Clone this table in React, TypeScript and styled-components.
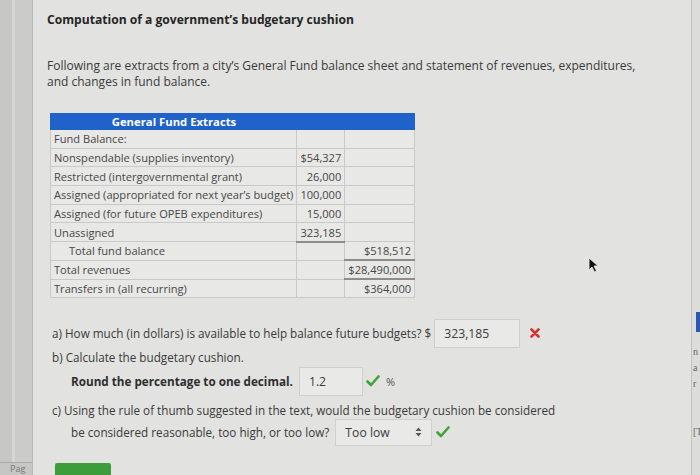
import React from "react";
import styled, { createGlobalStyle } from "styled-components";

const Global = createGlobalStyle`
  html, body { margin: 0; padding: 0; background: #e2e2e0; }
  body { font-family: "Open Sans", "Noto Sans", sans-serif; color: #333; }
  * { box-sizing: border-box; }
`;

const Frame = styled.div`
  position: relative;
  display: flex;
  width: 700px;
  height: 475px;
  overflow: hidden;
  background: #e2e2e0;
`;

const LeftRail = styled.div`
  width: 33px;
  flex: none;
  display: flex;
  flex-direction: column;
  background: #cbcbc9;
  border-right: 1px solid #b9b9b7;
`;

const RailInner = styled.div`
  flex: 1;
  display: flex;
`;

const RailStripe = styled.div<{ $w: number; $bg: string }>`
  width: ${(p) => p.$w}px;
  background: ${(p) => p.$bg};
`;

const RailFoot = styled.div`
  height: 13px;
  border-top: 1px solid #aaa;
  font-size: 9px;
  line-height: 12px;
  padding-left: 10px;
  color: #777;
  background: #c6c6c4;
  white-space: nowrap;
`;

const Main = styled.div`
  flex: 1;
  padding: 11px 0 0 14px;
  display: flex;
  flex-direction: column;
`;

const Title = styled.h1`
  margin: 0;
  font-size: 12.1px;
  line-height: 18px;
  font-weight: 700;
  color: #262626;
`;

const Intro = styled.p`
  margin: 29px 0 0;
  width: 600px;
  font-size: 12px;
  line-height: 15.5px;
  color: #3a3a3a;
`;

const Table = styled.table`
  margin: 24px 0 0 3px;
  border-collapse: collapse;
  width: 363px;
  font-size: 11.1px;
  color: #474747;
`;

const HeadCell = styled.th`
  background: #1f62c9;
  color: #fff;
  font-weight: 700;
  font-size: 11.3px;
  height: 16px;
  padding: 0;
  text-align: left;
  border: 1px solid #1f62c9;
`;

const HeadText = styled.span`
  display: inline-block;
  width: 246px;
  text-align: center;
`;

const Row = styled.tr`
  height: 18.7px;
`;

const Cell = styled.td<{ $indent?: boolean; $num?: boolean; $w?: number; $top?: boolean }>`
  border: 1px solid #c9c9c7;
  ${(p) => (p.$top ? "border-top: 2px solid #8d8d8b;" : "")}
  padding: 0 3px 0 ${(p) => (p.$indent ? "18px" : "3px")};
  text-align: ${(p) => (p.$num ? "right" : "left")};
  white-space: nowrap;
  background: #e8e8e6;
  ${(p) => (p.$w ? `width: ${p.$w}px;` : "")}
  line-height: 15px;
`;

const Questions = styled.div`
  margin: 20px 0 0 5px;
  display: flex;
  flex-direction: column;
  font-size: 11.7px;
  color: #3a3a3a;
`;

const QLine = styled.div<{ $indent?: boolean; $h: number }>`
  display: flex;
  align-items: center;
  height: ${(p) => p.$h}px;
  padding-left: ${(p) => (p.$indent ? "19px" : "0")};
  white-space: nowrap;
`;

const Bold = styled.span`
  font-weight: 700;
  color: #2e2e2e;
`;

const Input = styled.div<{ $w: number }>`
  flex: none;
  width: ${(p) => p.$w}px;
  height: 29px;
  border: 1px solid #cfcfcd;
  background: #e9e9e7;
  display: flex;
  align-items: center;
  padding-left: 9px;
  font-size: 12.2px;
  color: #3c3c3c;
`;

const Select = styled(Input)`
  height: 27px;
  justify-content: space-between;
  padding-right: 9px;
`;

const Mark = styled.span<{ $ml: number }>`
  display: inline-flex;
  margin-left: ${(p) => p.$ml}px;
`;

const Pct = styled.span`
  margin-left: 6px;
  font-size: 11px;
  color: #555;
`;

const Button = styled.div`
  margin: 23px 0 0 8px;
  width: 56px;
  height: 20px;
  background: #3d9d3b;
  border-radius: 2px 2px 0 0;
`;

const RightRail = styled.div`
  width: 9px;
  flex: none;
  position: relative;
  background: #dcdcda;
  border-left: 1px solid #c2c2c0;
  overflow: hidden;
  display: flex;
  flex-direction: column;
  padding-top: 312px;
`;

const RightBar = styled.div`
  height: 20px;
  margin-left: 4px;
  background: #2a58b0;
`;

const RightText = styled.div`
  margin-top: 12px;
  font-family: "Liberation Serif", serif;
  font-size: 10px;
  line-height: 16px;
  color: #666;
  padding-left: 1px;
  white-space: nowrap;
`;

const Cursor = styled.svg`
  position: absolute;
  left: 588px;
  top: 257px;
`;

const Check = () => (
  <svg width="14" height="12" viewBox="0 0 14 12">
    <path d="M1.5 6.5 L5 10 L12.5 1.5" stroke="#3ea43a" strokeWidth="2.6" fill="none" strokeLinecap="round" strokeLinejoin="round" />
  </svg>
);

const Cross = () => (
  <svg width="10" height="10" viewBox="0 0 10 10">
    <path d="M1.5 1.5 L8.5 8.5 M8.5 1.5 L1.5 8.5" stroke="#d8322e" strokeWidth="2.6" strokeLinecap="round" />
  </svg>
);

const Arrows = () => (
  <svg width="7" height="10" viewBox="0 0 7 10">
    <path d="M3.5 0.5 L6.5 4 L0.5 4 Z M3.5 9.5 L6.5 6 L0.5 6 Z" fill="#555" />
  </svg>
);

type R = { label: string; indent?: boolean; c2?: string; c3?: string; top2?: boolean; top3?: boolean };

const rows: R[] = [
  { label: "Fund Balance:" },
  { label: "Nonspendable (supplies inventory)", c2: "$54,327" },
  { label: "Restricted (intergovernmental grant)", c2: "26,000" },
  { label: "Assigned (appropriated for next year\u2019s budget)", c2: "100,000" },
  { label: "Assigned (for future OPEB expenditures)", c2: "15,000" },
  { label: "Unassigned", c2: "323,185" },
  { label: "Total fund balance", indent: true, c3: "$518,512", top2: true },
  { label: "Total revenues", c3: "$28,490,000", top3: true },
  { label: "Transfers in (all recurring)", c3: "$364,000", top3: true },
];

export default function App() {
  return (
    <>
      <Global />
      <Frame>
        <LeftRail>
          <RailInner>
            <RailStripe $w={12} $bg="#c7c7c5" />
            <RailStripe $w={3} $bg="#d6d6d4" />
            <RailStripe $w={17} $bg="#cbcbc9" />
          </RailInner>
          <RailFoot>Pag</RailFoot>
        </LeftRail>
        <Main>
          <Title>Computation of a government’s budgetary cushion</Title>
          <Intro>
            Following are extracts from a city’s General Fund balance sheet and statement of revenues, expenditures,
            and changes in fund balance.
          </Intro>
          <Table>
            <thead>
              <tr>
                <HeadCell colSpan={3}>
                  <HeadText>General Fund Extracts</HeadText>
                </HeadCell>
              </tr>
            </thead>
            <tbody>
              {rows.map((r, i) => (
                <Row key={i}>
                  <Cell $indent={r.indent} $w={i === 0 ? 246 : undefined}>{r.label}</Cell>
                  <Cell $num $top={r.top2} $w={i === 0 ? 49 : undefined}>{r.c2 ?? ""}</Cell>
                  <Cell $num $top={r.top3}>{r.c3 ?? ""}</Cell>
                </Row>
              ))}
            </tbody>
          </Table>
          <Questions>
            <QLine $h={30}>
              a) How much (in dollars) is available to help balance future budgets? $&nbsp;
              <Input $w={86}>323,185</Input>
              <Mark $ml={10}>
                <Cross />
              </Mark>
            </QLine>
            <QLine $h={18}>b) Calculate the budgetary cushion.</QLine>
            <QLine $indent $h={30}>
              <Bold>Round the percentage to one decimal.</Bold>&nbsp;&nbsp;
              <Input $w={64}>1.2</Input>
              <Mark $ml={3}>
                <Check />
              </Mark>
              <Pct>%</Pct>
            </QLine>
            <QLine $h={28}>c) Using the rule of thumb suggested in the text, would the budgetary cushion be considered</QLine>
            <QLine $indent $h={16}>
              be considered reasonable, too high, or too low?&nbsp;&nbsp;
              <Select $w={97}>
                Too low
                <Arrows />
              </Select>
              <Mark $ml={4}>
                <Check />
              </Mark>
            </QLine>
          </Questions>
          <Button />
        </Main>
        <RightRail>
          <RightBar />
          <RightText>
            n<br />a<br />r<br />
            <br />
            <br />[Th
          </RightText>
        </RightRail>
        <Cursor width="12" height="16" viewBox="0 0 12 16">
          <path d="M1 1 L1 13 L4 10 L6.5 15 L8.5 14 L6 9 L10 9 Z" fill="#111" stroke="#eee" strokeWidth="0.8" />
        </Cursor>
      </Frame>
    </>
  );
}
